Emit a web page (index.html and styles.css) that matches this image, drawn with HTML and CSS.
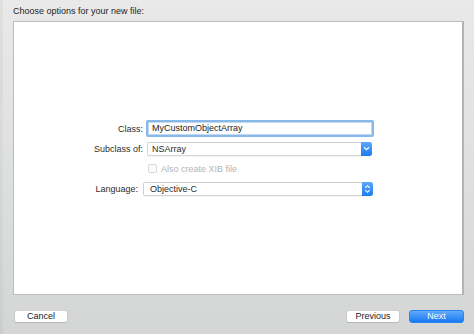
FILE: index.html
```html
<!DOCTYPE html>
<html>
<head>
<meta charset="utf-8">
<link rel="stylesheet" href="styles.css">
</head>
<body>
<div class="sheet">
  <div class="title">Choose options for your new file:</div>
  <div class="panel">
    <div class="form">
      <div class="label">Class:</div>
      <div class="cell"><div class="textfield">MyCustomObjectArray</div></div>
      <div class="label">Subclass of:</div>
      <div class="cell"><div class="combo">NSArray<span class="blue"><svg width="7" height="5" viewBox="0 0 7 5"><path d="M1 1.2 L3.5 3.6 L6 1.2" fill="none" stroke="#fff" stroke-width="1.2"/></svg></span></div></div>
      <div class="label"></div>
      <div class="cell"><div class="check"><span class="box"></span>Also create XIB file</div></div>
      <div class="label label-popup">Language:</div>
      <div class="cell"><div class="popup">Objective-C<span class="blue"><svg width="7" height="10" viewBox="0 0 7 10"><path d="M1.3 3.8 L3.5 1.7 L5.7 3.8 M1.3 6.2 L3.5 8.3 L5.7 6.2" fill="none" stroke="#fff" stroke-width="1.1"/></svg></span></div></div>
    </div>
  </div>
  <div class="footer">
    <button class="btn">Cancel</button>
    <div class="spacer"></div>
    <button class="btn prev">Previous</button>
    <button class="btn primary">Next</button>
  </div>
</div>
</body>
</html>
```
FILE: styles.css
```css
* { box-sizing: border-box; }
html, body { margin: 0; padding: 0; }
body {
  width: 474px;
  height: 334px;
  overflow: hidden;
  font-family: "Liberation Sans", Arial, sans-serif;
  font-size: 9px;
  color: #2a2a2a;
  background: linear-gradient(#e9e9e9, #d4d6d6);
}
.sheet {
  height: 334px;
  display: flex;
  flex-direction: column;
  padding: 0 10px 0 13px;
  box-shadow: inset 3px 0 0 rgba(0,0,0,0.035);
}
.title {
  height: 21px;
  padding-top: 5px;
  line-height: 12px;
  color: #262626;
}
.panel {
  height: 274px;
  background: #fff;
  border: 1px solid #bcbcbc;
  border-right: 2px solid #b2b4b4;
  display: flex;
  align-items: center;
}
.form {
  display: grid;
  grid-template-columns: 129px 230px;
  grid-template-rows: repeat(4, 20px);
  column-gap: 3px;
  align-items: center;
  margin-top: 1px;
}
.label {
  text-align: right;
  color: #2e2e2e;
}
.label-popup { padding-right: 5px; }
.cell { position: relative; height: 20px; display: flex; align-items: center; }
.textfield {
  width: 228px;
  height: 17px;
  border: 2px solid #86b8ea;
  border-radius: 2px;
  padding-left: 4px;
  line-height: 13px;
  color: #1c1c1c;
  box-shadow: inset 0 0 0 1px #c5d9ee;
}
.combo, .popup {
  position: relative;
  height: 14px;
  border: 1px solid #d6d6d6;
  border-top-color: #cfcfcf;
  border-radius: 2px;
  line-height: 12px;
  padding-left: 4px;
  background: #fff;
  box-shadow: 0 1px 0 rgba(0,0,0,0.04);
}
.combo { width: 225px; margin-left: 1px; }
.popup { width: 230px; margin-left: -3px; padding-left: 6px; border-color: #d0d0d0; }
.blue {
  position: absolute;
  right: -1px;
  top: -1px;
  bottom: -1px;
  width: 11px;
  border-radius: 0 3px 3px 0;
  background: linear-gradient(#5aa8fb, #1b7cf4);
  display: flex;
  align-items: center;
  justify-content: center;
}
.check {
  display: flex;
  align-items: center;
  color: #b4b4b4;
  margin-left: 2px;
}
.box {
  width: 9px;
  height: 9px;
  border: 1px solid #d8d8d8;
  border-radius: 2px;
  background: #fbfbfb;
  margin-right: 4px;
}
.footer {
  display: flex;
  align-items: flex-start;
  padding-top: 15px;
}
.spacer { flex: 1; }
.btn {
  font-family: "Liberation Sans", Arial, sans-serif;
  font-size: 9px;
  height: 13px;
  padding: 0;
  line-height: 11px;
  border: 1px solid #c9c9c9;
  border-top-color: #d2d2d2;
  border-bottom-color: #b8b8b8;
  border-radius: 3px;
  background: #fff;
  color: #222;
  width: 54px;
  margin-left: 1px;
}
.prev { margin-right: 9px; }
.primary {
  width: 55px;
  color: #fff;
  border-color: #2b83f0;
  background: linear-gradient(#5fabfb, #1a78f3);
  margin-left: 0;
}
```
